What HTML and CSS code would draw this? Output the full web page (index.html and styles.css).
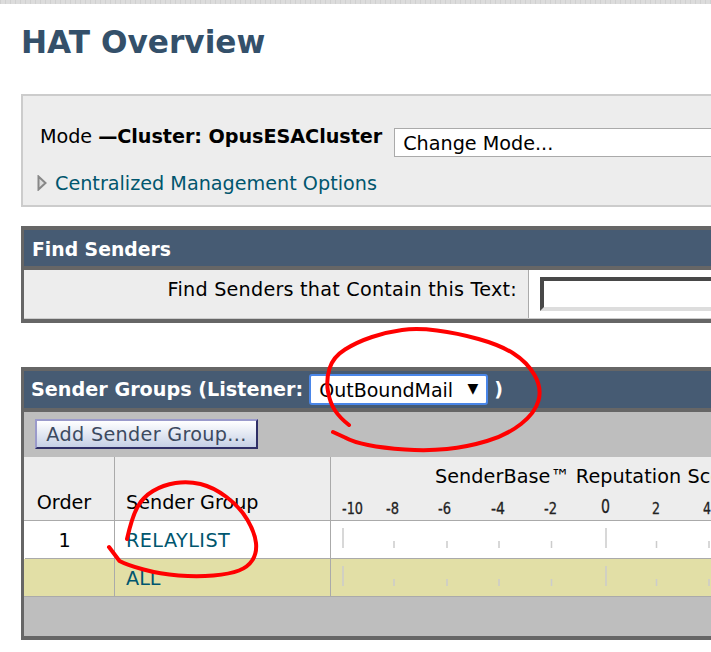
FILE: index.html
```
<!DOCTYPE html>
<html lang="en">
<head>
<meta charset="utf-8">
<title>HAT Overview</title>
<link rel="stylesheet" href="styles.css">
</head>
<body>
<div class="topband"></div>
<main class="page">
  <h1 class="title">HAT Overview</h1>

  <section class="mode-box">
    <div class="mode-row">
      <span class="mode-label">Mode <b>&mdash;Cluster: OpusESACluster</b></span>
      <select class="mode-select"><option>Change Mode...</option></select>
    </div>
    <div class="cm-row">
      <svg class="cm-arrow" width="10" height="16" viewBox="0 0 10 16"><path d="M1.500 1.500 L8.500 8 L1.500 14.500 Z" fill="#ddd" stroke="#888" stroke-width="2"/></svg>
      <a class="link" href="#">Centralized Management Options</a>
    </div>
  </section>

  <section class="panel find-panel">
    <h2 class="panel-head">Find Senders</h2>
    <div class="find-row">
      <label class="find-label">Find Senders that Contain this Text:</label>
      <div class="find-field"><input class="find-input" type="text"></div>
    </div>
  </section>

  <section class="panel groups-panel">
    <h2 class="panel-head groups-head"><span>Sender Groups (Listener:</span>
      <span class="listener"><select class="listener-select"><option>OutBoundMail</option></select></span>
      <span class="paren">)</span>
    </h2>
    <div class="toolbar"><button class="add-btn" type="button">Add Sender Group...</button></div>
    <div class="row row-head">
      <div class="cell c-order">Order</div>
      <div class="cell c-group">Sender Group</div>
      <div class="cell c-score">
        <div class="score-title">SenderBase&trade; Reputation Score</div>
        <svg class="scale" width="400" height="40" viewBox="0 0 400 40">
          <text x="11" y="34" textLength="21" lengthAdjust="spacingAndGlyphs">-10</text>
          <text x="55" y="34" textLength="13" lengthAdjust="spacingAndGlyphs">-8</text>
          <text x="107" y="34" textLength="13" lengthAdjust="spacingAndGlyphs">-6</text>
          <text x="160" y="34" textLength="14" lengthAdjust="spacingAndGlyphs">-4</text>
          <text x="213" y="34" textLength="13" lengthAdjust="spacingAndGlyphs">-2</text>
          <text class="zero" x="270" y="33" textLength="9" lengthAdjust="spacingAndGlyphs">0</text>
          <text x="321" y="34" textLength="8" lengthAdjust="spacingAndGlyphs">2</text>
          <text x="372" y="34" textLength="8" lengthAdjust="spacingAndGlyphs">4</text>
        </svg>
      </div>
    </div>
    <div class="row row-one">
      <div class="cell c-order num">1</div>
      <div class="cell c-group"><a class="link caps" href="#">RELAYLIST</a></div>
      <div class="cell c-score">
        <svg class="ticks" width="400" height="37" viewBox="0 0 400 37"><path d="M12 7V27M275 7V27M63 20V27M116 20V27M168 20V27M220.500 20V27M325.500 20V27M378 20V27"/></svg>
      </div>
    </div>
    <div class="row row-all">
      <div class="cell c-order"></div>
      <div class="cell c-group"><a class="link" href="#">ALL</a></div>
      <div class="cell c-score">
        <svg class="ticks" width="400" height="37" viewBox="0 0 400 37"><path d="M12 7V27M275 7V27M63 20V27M116 20V27M168 20V27M220.500 20V27M325.500 20V27M378 20V27"/></svg>
      </div>
    </div>
    <div class="panel-foot"></div>
  </section>
</main>

<svg class="scribble" width="711" height="652" viewBox="0 0 711 652" aria-hidden="true">
  <path d="M349 425Q340 418 335 410.500T328 391.500T329.500 368.500T345 349.500T372 337T402 330T437 330.500T478.500 339T513.500 353.500T534.500 375T538.500 400.500T521 424T487 441T447 449T405 449.500T368 445T345 437.500L333 432"/>
  <path d="M127 539Q132 517 137.500 507T153 491T175.500 483T200.500 484T226.500 497T247.500 520T256 543T252.500 560T239 570.500T213.500 575.500T178.500 575.500T143.500 569.500T119.500 561L109 547"/>
</svg>
</body>
</html>
```

FILE: styles.css
```
* { box-sizing: border-box; }
html, body { margin: 0; padding: 0; height: 652px; overflow: hidden; background: #fff; }
body {
  position: relative;
  font-family: "DejaVu Sans", Verdana, sans-serif;
  font-size: 19.2px;
  color: #000;
}
.topband {
  height: 4px;
  background-color: #dcdcdc;
  background-image: repeating-linear-gradient(90deg, #d0d0d0 0 1px, transparent 1px 5px);
}
.page { width: 1000px; padding-left: 21px; }
.title {
  margin: 0;
  height: 90px;
  padding-top: 19px;
  font-size: 31.2px;
  line-height: 38px;
  font-weight: 700;
  color: #34506a;
}
.mode-box {
  height: 113px;
  border: 2px solid #ccc;
  background: #ededed;
  padding: 30px 0 0 17px;
}
.mode-row { display: flex; align-items: flex-start; height: 31px; gap: 12px; }
.mode-label { line-height: 22px; white-space: nowrap; letter-spacing: -0.05px; }
.mode-label b { font-weight: 700; }
.mode-select {
  appearance: none;
  flex: none;
  width: 500px;
  height: 29px;
  margin-top: 2px;
  border: 1px solid #aaa;
  border-radius: 0;
  background: #fff;
  font: inherit;
  color: #000;
  padding: 2px 8px 0;
}
.cm-row { display: flex; align-items: center; height: 30px; margin: 11px 0 0 -3px; gap: 8px; }
.cm-arrow { flex: none; }
.link { color: #00566e; text-decoration: none; }
.caps { letter-spacing: 0.45px; }

.panel { border: 4px solid #666; border-left-width: 3px; }
.panel-head {
  margin: 0;
  background: #465b73;
  color: #fff;
  font-size: 19.2px;
  font-weight: 700;
  border-bottom: 4px solid #666;
  display: flex;
  align-items: center;
  padding-left: 7px;
}
.find-panel { margin-top: 19px; height: 97px; }
.find-panel .panel-head { height: 40px; font-size: 18.8px; padding: 2px 0 0 8px; }
.find-row { display: flex; height: 49px; border-bottom: 1px solid #ccc; }
.find-label {
  flex: none;
  width: 505px;
  background: #ededed;
  border-right: 1px solid #aaa;
  text-align: right;
  padding: 8px 11px 0 0;
  letter-spacing: 0.23px;
}
.find-field { flex: 1; background: #fff; padding: 7px 0 0 11px; }
.find-input {
  display: block;
  width: 500px;
  height: 34px;
  border: 4px solid #484848;
  border-right-color: #ddd;
  border-bottom-color: #ddd;
  background: #fff;
}
.groups-head { height: 41px; gap: 6px; }
.groups-panel { margin-top: 44px; height: 273px; }
.listener { position: relative; display: block; flex: none; width: 179px; height: 31px; }
.listener::after {
  content: "\25BC";
  position: absolute;
  right: 10px;
  top: 6px;
  font-size: 14px;
  font-weight: 400;
  color: #000;
}
.listener-select {
  appearance: none;
  display: block;
  width: 100%;
  height: 100%;
  border: 2px solid #4a86e8;
  border-radius: 3px;
  background: #fff;
  font-family: inherit;
  font-size: 19px;
  color: #000;
  padding: 0 0 0 8px;
}
.paren { font-weight: 700; }
.toolbar { height: 45px; background: #bebebe; padding: 7px 0 0 11px; }
.add-btn {
  display: block;
  width: 223px;
  height: 30px;
  padding: 0;
  border: 2px solid;
  border-color: #9a9acb #2f2f66 #2f2f66 #9a9acb;
  background: linear-gradient(#fff, #c6d0e6);
  color: #3c4a60;
  font: inherit;
  letter-spacing: 0.33px;
}
.row { display: flex; border-bottom: 1px solid #aaa; }
.row-head { height: 64px; background: #ededed; }
.row-one { height: 38px; background: #fff; margin-left: 1px; }
.row-all { height: 38px; background: #e2dfa6; }
.cell { flex: none; }
.c-order { width: 90px; padding-right: 10px; text-align: center; line-height: 39px; }
.row-one .c-order { width: 89px; }
.c-group { width: 216px; border-left: 1px solid #aaa; padding-left: 11px; line-height: 40px; }
.c-score { width: 600px; border-left: 1px solid #aaa; }
.row-head .c-order { padding-top: 26px; }
.row-head .c-group { padding-top: 26px; }
.score-title { padding: 8px 0 0 104px; line-height: 24px; white-space: nowrap; letter-spacing: 0.07px; }
.scale { display: block; margin-top: -9px; }
.scale text { font-family: "DejaVu Sans", sans-serif; font-size: 15px; fill: #222; stroke: #222; stroke-width: 0.300; }
.scale .zero { font-size: 20px; }
.ticks { display: block; }
.ticks path { stroke: #ccc; stroke-width: 1.500; fill: none; }
.panel-foot { height: 39px; background: #bebebe; }
.scribble { position: absolute; left: 0; top: 0; pointer-events: none; }
.scribble path { fill: none; stroke: #f00; stroke-width: 4; stroke-linecap: round; stroke-linejoin: round; }
```
